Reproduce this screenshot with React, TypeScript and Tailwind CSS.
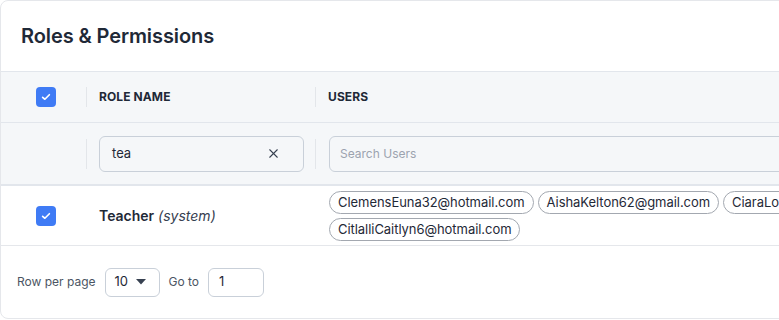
import { X } from 'lucide-react'

const users = [
  'ClemensEuna32@hotmail.com',
  'AishaKelton62@gmail.com',
  'CiaraLouise88@yahoo.com',
  'CitlalliCaitlyn6@hotmail.com',
]

function Checkbox() {
  return (
    <div className="w-5 h-5 rounded-[4px] bg-[#3f7bf5] flex items-center justify-center shrink-0">
      <svg viewBox="0 0 16 16" className="w-3 h-3" fill="none" stroke="white" strokeWidth="2.2" strokeLinecap="round" strokeLinejoin="round">
        <path d="M3.5 8.5l3 2.5 6-6" />
      </svg>
    </div>
  )
}

function Sep({ tall }: { tall?: boolean }) {
  return <div className={`w-px bg-[#e3e6ea] shrink-0 ${tall ? 'h-[30px]' : 'h-5'}`} />
}

export default function App() {
  return (
    <div className="w-[779px] h-[320px] overflow-hidden bg-white font-['Inter',sans-serif] text-[#1f2937]">
      <div className="w-[980px] h-[319px] border border-[#e5e7eb] rounded-lg overflow-hidden flex flex-col">
        <div className="h-[70px] flex items-center px-5 shrink-0">
          <h1 className="text-[20px] font-semibold tracking-[-0.1px] text-[#1f2937]">Roles &amp; Permissions</h1>
        </div>

        {/* header */}
        <div className="h-[52px] grid grid-cols-[85px_229px_1fr] items-center bg-[#f5f7f9] border-y border-[#e2e6ec] shrink-0">
          <div className="pl-[35px]">
            <Checkbox />
          </div>
          <div className="flex items-center gap-3">
            <Sep />
            <span className="text-[12px] font-bold tracking-[0.1px]">ROLE NAME</span>
          </div>
          <div className="flex items-center gap-3">
            <Sep />
            <span className="text-[12px] font-bold tracking-[0.1px]">USERS</span>
          </div>
        </div>

        {/* filters */}
        <div className="h-[63px] grid grid-cols-[85px_229px_1fr] items-center bg-[#f5f7f9] border-b-2 border-[#e2e6ec] shrink-0">
          <div />
          <div className="flex items-center gap-3">
            <Sep tall />
            <div className="w-[205px] h-9 rounded-md border border-[#c9d0d9] bg-[#f5f7f9] flex items-center justify-between pl-3 pr-[22px]">
              <span className="text-[13px]">tea</span>
              <X className="w-[15px] h-[15px] text-[#374151]" strokeWidth={1.75} />
            </div>
          </div>
          <div className="flex items-center gap-[13px]">
            <Sep tall />
            <div className="flex-1 h-9 rounded-md border border-[#c9d0d9] bg-[#f5f7f9] flex items-center px-[10px] mr-6">
              <span className="text-[12px] text-[#9ca3af]">Search Users</span>
            </div>
          </div>
        </div>

        {/* row */}
        <div className="h-[60px] grid grid-cols-[85px_229px_1fr] items-center border-b border-[#e5e7eb] shrink-0">
          <div className="pl-[35px]">
            <Checkbox />
          </div>
          <div className="pl-[13px] text-[14px]">
            <span className="font-semibold">Teacher</span> <span className="italic text-[#374151]">(system)</span>
          </div>
          <div className="pl-[14px]">
            <div className="max-w-[600px] flex flex-wrap gap-1">
              {users.map((u) => (
                <span
                  key={u}
                  className="h-[23px] px-2 rounded-full border border-[#a3a8b0] text-[13px] tracking-[-0.05px] leading-none flex items-center text-[#1f2937]"
                >
                  {u}
                </span>
              ))}
            </div>
          </div>
        </div>

        {/* footer */}
        <div className="flex-1 flex items-center gap-[9px] pl-4 text-[12px] text-[#4b5563]">
          <span>Row per page</span>
          <div className="w-[55px] h-[29px] rounded-md border border-[#c9d0d9] flex items-center justify-between pl-[9px] pr-[13px] text-[13px] text-[#1f2937]">
            <span>10</span>
            <svg viewBox="0 0 10 6" className="w-[10px] h-[6px]" fill="#374151">
              <path d="M0 0h10L5 5.5z" />
            </svg>
          </div>
          <span>Go to</span>
          <div className="w-14 h-[29px] rounded-md border border-[#c9d0d9] flex items-center pl-[10px] text-[13px] text-[#1f2937]">
            1
          </div>
        </div>
      </div>
    </div>
  )
}
